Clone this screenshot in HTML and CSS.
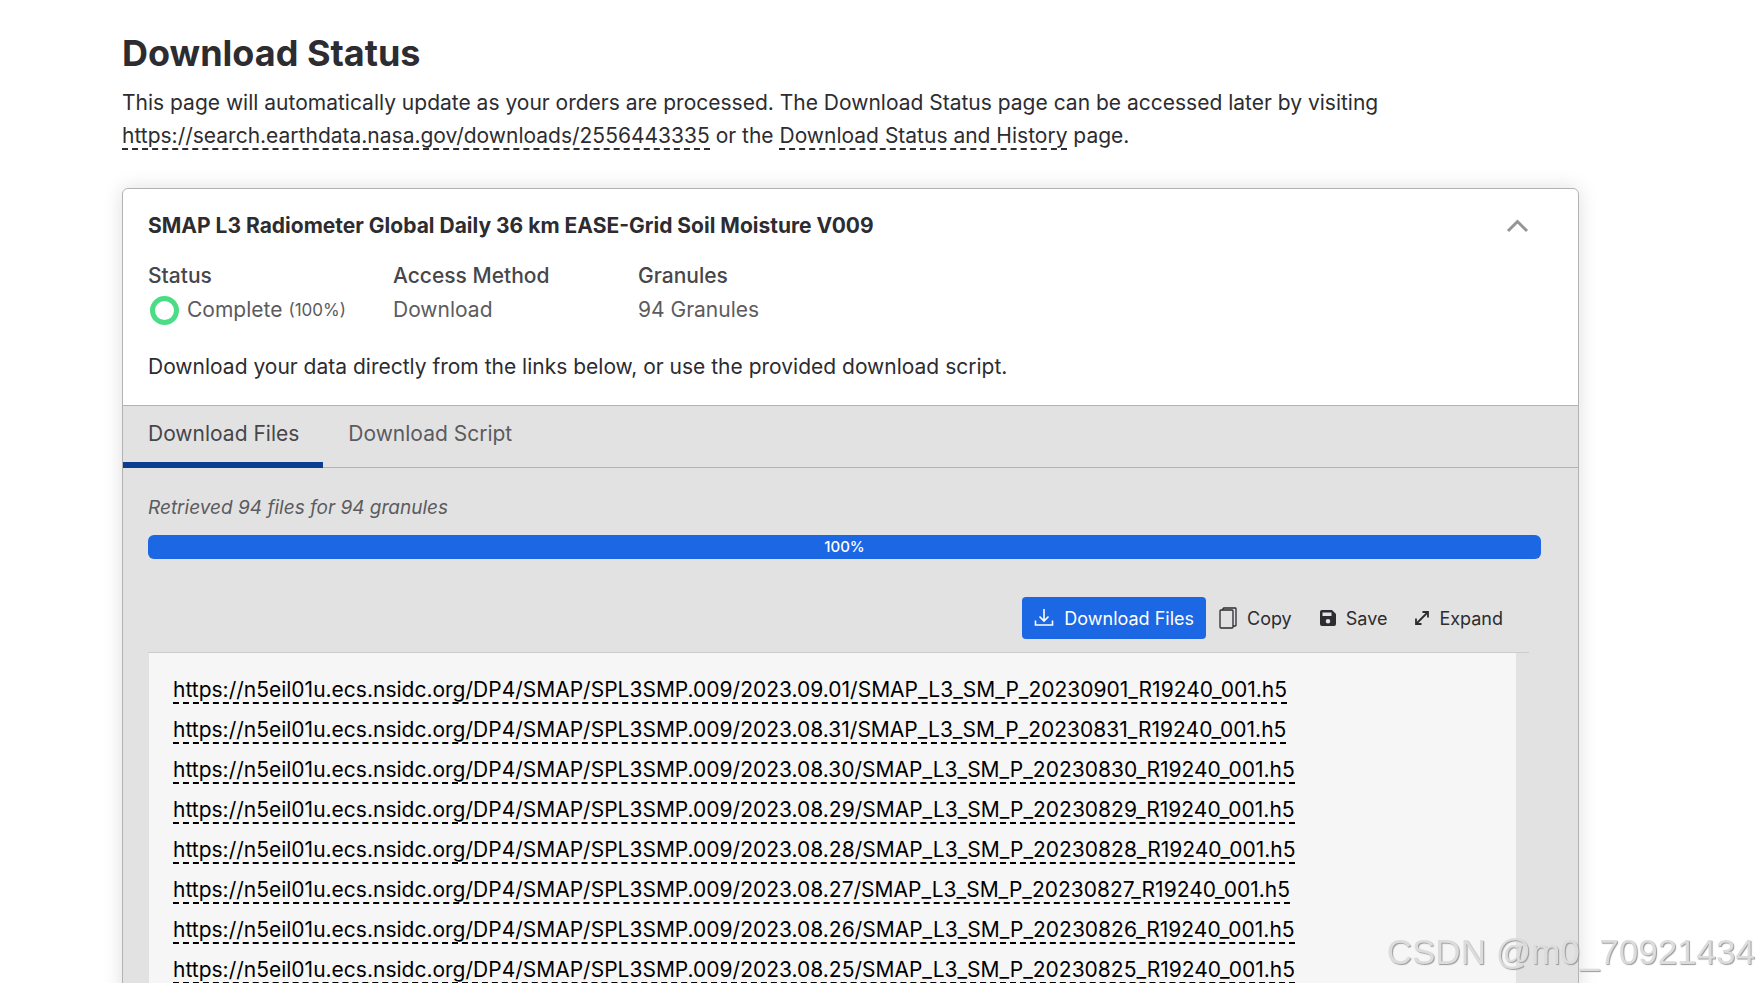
FILE: index.html
```
<!DOCTYPE html>
<html lang="en">
<head>
    <meta charset="UTF-8">
    <meta name="viewport" content="width=device-width, initial-scale=1.0">
    <title>Download Status</title>
    <link rel="stylesheet" href="styles.css">
</head>
<body>
    <main class="page">
        <h1>Download Status</h1>
        <p class="intro">This page will automatically update as your orders are processed. The Download Status page can be accessed later by visiting<br>
            <a href="#">https://search.earthdata.nasa.gov/downloads/2556443335</a> or the <a href="#">Download Status and History</a> page.</p>

        <section class="card">
            <header class="card-header">
                <div class="card-title">
                    <h2>SMAP L3 Radiometer Global Daily 36 km EASE-Grid Soil Moisture V009</h2>
                    <button class="toggle" aria-label="Collapse">
                        <svg width="24" height="24" viewBox="0 0 24 24" fill="none" stroke="#959599" stroke-width="3"><path d="M2 17 11.500 7.500 21 17"/></svg>
                    </button>
                </div>
                <dl class="details">
                    <div>
                        <dt>Status</dt>
                        <dd class="complete"><span class="ring"></span>Complete <small>(100%)</small></dd>
                    </div>
                    <div>
                        <dt>Access Method</dt>
                        <dd>Download</dd>
                    </div>
                    <div>
                        <dt>Granules</dt>
                        <dd>94 Granules</dd>
                    </div>
                </dl>
                <p class="message">Download your data directly from the links below, or use the provided download script.</p>
            </header>

            <nav class="tabs">
                <button class="tab active">Download Files</button>
                <button class="tab">Download Script</button>
            </nav>

            <div class="panel">
                <p class="retrieved">Retrieved 94 files for 94 granules</p>
                <div class="progress"><div class="bar">100%</div></div>

                <div class="actions">
                    <button class="action primary">
                        <svg width="20" height="20" viewBox="0 0 20 20" fill="none" stroke="currentColor" stroke-width="1.6"><path d="M10 1v12M5.500 8.500 10 13l4.500-4.500M1.500 12.500V17h17v-4.500"/></svg>
                        Download Files
                    </button>
                    <button class="action copy">
                        <svg width="18" height="22" viewBox="0 0 18 22" fill="none" stroke="currentColor" stroke-width="1.3"><rect x="1" y="3" width="13" height="18" rx="1"/><path d="M4 3V1.800c0-.5.3-.8.8-.8h11.400c.5 0 .8.300.8.800v16.400c0 .5-.3.800-.8.800H14"/></svg>
                        Copy
                    </button>
                    <button class="action save">
                        <svg width="16" height="16" viewBox="0 0 16 16" fill="currentColor"><path fill-rule="evenodd" d="M2 0h10l4 4v10a2 2 0 0 1-2 2H2a2 2 0 0 1-2-2V2a2 2 0 0 1 2-2zm.5 2.500V6h9V2.500zM8 9a2.300 2.300 0 1 0 0 4.600A2.300 2.300 0 0 0 8 9z"/></svg>
                        Save
                    </button>
                    <button class="action expand">
                        <svg width="14" height="14" viewBox="0 0 14 14" fill="none" stroke="currentColor" stroke-width="1.8"><path d="M7.500 1H13v5.500M13 1 1 13M1 7.500V13h5.500"/></svg>
                        Expand
                    </button>
                </div>

                <ul class="files">
                    <li><a href="#">https://n5eil01u.ecs.nsidc.org/DP4/SMAP/SPL3SMP.009/2023.09.01/SMAP_L3_SM_P_20230901_R19240_001.h5</a></li>
                    <li><a href="#">https://n5eil01u.ecs.nsidc.org/DP4/SMAP/SPL3SMP.009/2023.08.31/SMAP_L3_SM_P_20230831_R19240_001.h5</a></li>
                    <li><a href="#">https://n5eil01u.ecs.nsidc.org/DP4/SMAP/SPL3SMP.009/2023.08.30/SMAP_L3_SM_P_20230830_R19240_001.h5</a></li>
                    <li><a href="#">https://n5eil01u.ecs.nsidc.org/DP4/SMAP/SPL3SMP.009/2023.08.29/SMAP_L3_SM_P_20230829_R19240_001.h5</a></li>
                    <li><a href="#">https://n5eil01u.ecs.nsidc.org/DP4/SMAP/SPL3SMP.009/2023.08.28/SMAP_L3_SM_P_20230828_R19240_001.h5</a></li>
                    <li><a href="#">https://n5eil01u.ecs.nsidc.org/DP4/SMAP/SPL3SMP.009/2023.08.27/SMAP_L3_SM_P_20230827_R19240_001.h5</a></li>
                    <li><a href="#">https://n5eil01u.ecs.nsidc.org/DP4/SMAP/SPL3SMP.009/2023.08.26/SMAP_L3_SM_P_20230826_R19240_001.h5</a></li>
                    <li><a href="#">https://n5eil01u.ecs.nsidc.org/DP4/SMAP/SPL3SMP.009/2023.08.25/SMAP_L3_SM_P_20230825_R19240_001.h5</a></li>
                </ul>
            </div>
        </section>
    </main>
    <div class="watermark">CSDN @m0_70921434</div>
</body>
</html>
```

FILE: styles.css
```
* {
    box-sizing: border-box;
}
body {
    margin: 0;
    height: 100vh;
    overflow: hidden;
    background: #fff;
    color: #2c2c31;
    font-family: Inter, "Open Sans", sans-serif;
    font-size: 21px;
}
h1, h2, p, dl, dd, ul {
    margin: 0;
    padding: 0;
}
button {
    border: 0;
    background: none;
    color: inherit;
    font: inherit;
    cursor: pointer;
}
a {
    color: inherit;
    text-decoration: none;
    border-bottom: 2px dashed currentColor;
}
.page {
    margin: 0 180px 0 122px;
    padding-top: 30px;
}
h1 {
    font-size: 36px;
    line-height: 46px;
    font-weight: 700;
}
.intro {
    margin: 10px 0 36px;
    line-height: 33px;
}
.card {
    border: 1px solid #b3b3b6;
    border-radius: 6px;
    box-shadow: 0 0 20px rgba(0, 0, 0, 0.13);
    overflow: hidden;
}
.card-header {
    padding: 20px 25px 21px;
}
.card-title {
    display: flex;
    justify-content: space-between;
    align-items: center;
}
h2 {
    font-size: 21px;
    line-height: 34px;
    font-weight: 700;
}
.toggle {
    display: flex;
    padding: 0;
    margin-right: 23px;
}
.details {
    display: grid;
    grid-template-columns: repeat(3, 245px);
    margin-top: 16px;
    line-height: 34px;
    color: #5b5b60;
}
.details dt {
    color: #46464b;
    font-weight: 500;
}
.complete {
    display: flex;
    align-items: center;
}
.complete small {
    margin-left: 6px;
    font-size: 17px;
}
.ring {
    width: 29px;
    height: 29px;
    margin: 0 8px 0 2px;
    border: 5px solid #4bdc86;
    border-radius: 50%;
}
.message {
    margin-top: 23px;
    line-height: 34px;
}
.tabs {
    display: flex;
    height: 63px;
    background: #e2e2e2;
    border-top: 1px solid #b3b3b6;
    border-bottom: 1px solid #b3b3b6;
}
.tab {
    height: 62px;
    padding: 0 24px 2px 25px;
    border-bottom: 6px solid transparent;
    color: #5b5b60;
}
.tab.active {
    border-color: #0b3d91;
    color: #46464b;
}
.panel {
    padding: 24px 37px 0 25px;
    background: #e2e2e2;
}
.retrieved {
    color: #5b5b60;
    font-size: 19px;
    line-height: 32px;
    font-style: italic;
}
.progress {
    height: 24px;
    margin-top: 11px;
    border-radius: 6px;
    background: #fff;
    overflow: hidden;
}
.bar {
    background: #1c67e3;
    color: #fff;
    font-size: 15px;
    font-weight: 500;
    line-height: 24px;
    text-align: center;
}
.actions {
    display: flex;
    justify-content: flex-end;
    margin: 38px 12px 0 0;
    padding: 0 26px 13px 0;
    border-bottom: 1px solid #ccc;
}
.action {
    display: flex;
    align-items: center;
    height: 42px;
    padding: 0;
    font-size: 18px;
    white-space: nowrap;
}
.action svg {
    margin-right: 10px;
}
.primary {
    padding: 0 12px;
    border-radius: 4px;
    background: #1c67e3;
    color: #fff;
}
.copy {
    margin-left: 13px;
}
.save, .expand {
    margin-left: 28px;
}
.files {
    margin: 0 25px 0 1px;
    padding: 17px 24px;
    list-style: none;
    background: #f6f6f6;
    color: #000;
}
.files li {
    line-height: 40px;
    white-space: nowrap;
}
.watermark {
    position: fixed;
    right: 4px;
    bottom: 11px;
    color: #dcdcdc;
    font-family: "Liberation Sans", Arial, sans-serif;
    font-size: 35px;
    line-height: 40px;
    text-shadow: 1px 1px 1px #999;
}
```
